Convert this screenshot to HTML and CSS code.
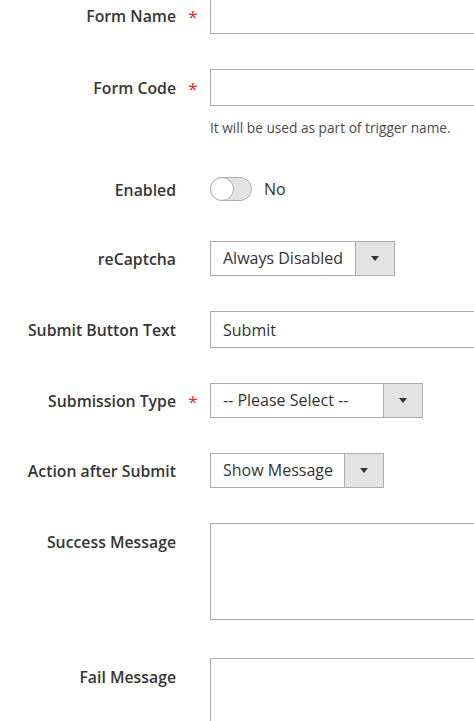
FILE: index.html
```html
<!DOCTYPE html>
<html lang="en">
<head>
<meta charset="utf-8">
<title>Form</title>
<link rel="stylesheet" href="styles.css">
</head>
<body>
<form class="form">
  <div class="row">
    <label class="label h-input">Form Name</label>
    <span class="req h-input">*</span>
    <div class="control"><input class="input" type="text"></div>
  </div>
  <div class="row">
    <label class="label h-input">Form Code</label>
    <span class="req h-input">*</span>
    <div class="control">
      <input class="input" type="text">
      <div class="note">It will be used as part of trigger name.</div>
    </div>
  </div>
  <div class="row">
    <label class="label h-toggle">Enabled</label>
    <span class="req-empty"></span>
    <div class="control toggle-wrap">
      <span class="toggle"><span class="knob"></span></span>
      <span class="toggle-text">No</span>
    </div>
  </div>
  <div class="row">
    <label class="label h-select">reCaptcha</label>
    <span class="req-empty"></span>
    <div class="control">
      <div class="select w-recaptcha"><span class="select-value">Always Disabled</span><span class="select-btn"><span class="arrow"></span></span></div>
    </div>
  </div>
  <div class="row">
    <label class="label h-input">Submit Button Text</label>
    <span class="req-empty"></span>
    <div class="control"><input class="input" type="text" value="Submit"></div>
  </div>
  <div class="row">
    <label class="label h-select">Submission Type</label>
    <span class="req h-select">*</span>
    <div class="control">
      <div class="select w-submission"><span class="select-value">-- Please Select --</span><span class="select-btn"><span class="arrow"></span></span></div>
    </div>
  </div>
  <div class="row">
    <label class="label h-select">Action after Submit</label>
    <span class="req-empty"></span>
    <div class="control">
      <div class="select w-action"><span class="select-value">Show Message</span><span class="select-btn"><span class="arrow"></span></span></div>
    </div>
  </div>
  <div class="row row-area">
    <label class="label label-area">Success Message</label>
    <span class="req-empty"></span>
    <div class="control"><textarea class="textarea"></textarea></div>
  </div>
  <div class="row row-area">
    <label class="label label-area">Fail Message</label>
    <span class="req-empty"></span>
    <div class="control"><textarea class="textarea"></textarea></div>
  </div>
</form>
</body>
</html>
```
FILE: styles.css
```css
html, body {
  margin: 0;
  padding: 0;
  background: #ffffff;
  overflow: hidden;
}
body {
  font-family: "Open Sans", "Liberation Sans", sans-serif;
  color: #333333;
  width: 474px;
  height: 721px;
}
.form {
  display: flex;
  flex-direction: column;
  gap: 35px;
  margin-top: -3px;
  width: 474px;
  height: 724px;
  overflow: hidden;
}
.row {
  display: grid;
  grid-template-columns: 176px 34px 1fr;
  align-items: start;
  flex-shrink: 0;
}
.row-area + .row-area {
  margin-top: 3px;
}
.label {
  text-align: right;
  font-size: 15.8px;
  font-weight: 600;
  color: #363636;
  white-space: nowrap;
  padding-top: 2px;
}
.req {
  color: #e22626;
  font-size: 17px;
  text-align: center;
  padding-top: 2px;
}
.h-input { line-height: 35px; }
.h-select { line-height: 33px; }
.h-toggle { line-height: 32px; }
.label-area {
  line-height: 20px;
  padding-top: 9px;
}
.control {
  display: flex;
  flex-direction: column;
  align-items: flex-start;
  overflow: hidden;
}
.input {
  box-sizing: border-box;
  width: 300px;
  height: 37px;
  margin: 0;
  border: 1px solid #adadad;
  border-radius: 0;
  padding: 0 12px;
  font-family: inherit;
  font-size: 16px;
  color: #333333;
  background: #fff;
  outline: none;
}
.note {
  margin-top: 13px;
  font-size: 13.7px;
  line-height: 18px;
  color: #4a4a4a;
  white-space: nowrap;
}
.toggle-wrap {
  flex-direction: row;
  align-items: center;
  height: 34px;
  gap: 12px;
}
.toggle {
  box-sizing: border-box;
  position: relative;
  width: 42px;
  height: 24px;
  border: 1px solid #adadad;
  border-radius: 12px;
  background: #e3e3e3;
}
.knob {
  position: absolute;
  left: -1px;
  top: -1px;
  box-sizing: border-box;
  width: 24px;
  height: 24px;
  border: 1px solid #adadad;
  border-radius: 50%;
  background: #ffffff;
}
.toggle-text {
  font-size: 16px;
  color: #333333;
}
.select {
  box-sizing: border-box;
  display: flex;
  height: 35px;
  border: 1px solid #adadad;
  background: #ffffff;
}
.w-recaptcha { width: 185px; }
.w-submission { width: 213px; }
.w-action { width: 174px; }
.select-value {
  flex: 1;
  padding-left: 12px;
  font-size: 16px;
  line-height: 33px;
  color: #333333;
  white-space: nowrap;
}
.select-btn {
  width: 38px;
  border-left: 1px solid #adadad;
  background: #e3e3e3;
  display: flex;
  align-items: center;
  justify-content: center;
}
.arrow {
  width: 0;
  height: 0;
  border-left: 4.5px solid transparent;
  border-right: 4.5px solid transparent;
  border-top: 5px solid #333333;
}
.textarea {
  display: block;
  box-sizing: border-box;
  width: 300px;
  height: 97px;
  margin: 0;
  border: 1px solid #adadad;
  border-radius: 0;
  resize: none;
  font-family: inherit;
  background: #fff;
  outline: none;
}
```
